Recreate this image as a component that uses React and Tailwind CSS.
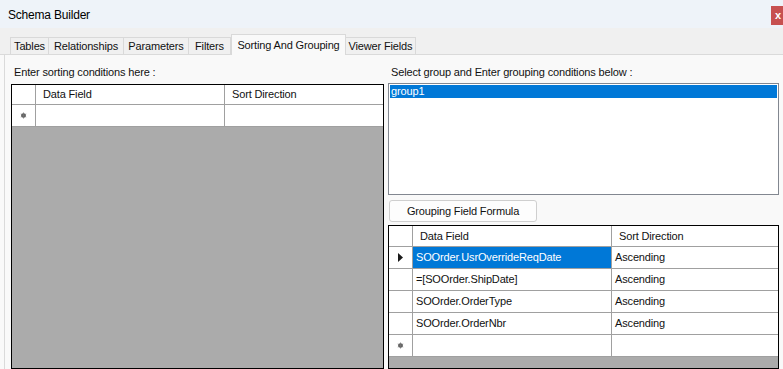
import React from "react";

const tabs = [
  { name: "Tables", w: "w-[39px]" },
  { name: "Relationships", w: "w-[75px]" },
  { name: "Parameters", w: "w-[65px]" },
  { name: "Filters", w: "w-[42px]" },
  { name: "Sorting And Grouping", w: "w-[115px]", active: true },
  { name: "Viewer Fields", w: "w-[70px]" },
];

const groupRows = [
  { field: "SOOrder.UsrOverrideReqDate", dir: "Ascending", current: true },
  { field: "=[SOOrder.ShipDate]", dir: "Ascending" },
  { field: "SOOrder.OrderType", dir: "Ascending" },
  { field: "SOOrder.OrderNbr", dir: "Ascending" },
];

function Arrow() {
  return (
    <svg width="5" height="9" viewBox="0 0 5 9">
      <path d="M0 0 L5 4.5 L0 9 Z" fill="#1a1a1a" />
    </svg>
  );
}

function Star() {
  return (
    <svg width="7" height="7" viewBox="0 0 7 7">
      <circle cx="3.5" cy="3.5" r="2.3" fill="#555" />
      <path d="M3.5 0.5 V6.5 M0.8 2 L6.2 5 M0.8 5 L6.2 2" stroke="#777" strokeWidth="0.8" />
    </svg>
  );
}

function App() {
  return (
    <div
      className="w-[783px] h-[369px] overflow-hidden flex flex-col bg-[#f9f9f9] text-[11px] tracking-[-0.15px] text-[#111]"
      style={{ fontFamily: '"Liberation Sans", Arial, sans-serif' }}
    >
      {/* title bar */}
      <div className="h-[28px] shrink-0 bg-[#eef3f9] flex items-start justify-between">
        <span className="pl-[8px] pt-[6px] text-[12px] tracking-[-0.2px] text-black">Schema Builder</span>
        <div className="mt-[6px] w-[12px] h-[19px] bg-[#c75050] overflow-hidden">
          <span className="block pl-[4px] text-white font-bold text-[11px] leading-[18px]">x</span>
        </div>
      </div>

      {/* tab strip */}
      <div className="h-[27px] shrink-0 bg-[#f0f0f0] flex items-end pl-[10px] border-b border-[#dadada]">
        {tabs.map((t) =>
          t.active ? (
            <div
              key={t.name}
              className={`${t.w} h-[21px] -mb-px bg-[#f9f9f9] border border-b-0 border-[#d9d9d9] flex items-start justify-center pt-[2px] whitespace-nowrap`}
            >
              {t.name}
            </div>
          ) : (
            <div
              key={t.name}
              className={`${t.w} h-[17px] bg-[#f0f0f0] border border-b-0 border-l-0 first:border-l border-[#d9d9d9] flex items-center justify-center whitespace-nowrap`}
            >
              {t.name}
            </div>
          )
        )}
      </div>

      {/* tab page */}
      <div className="flex-1 min-h-0 flex ml-[4px] border-l border-[#dadada] pt-[7px] pl-[6px] gap-[4px]">
        {/* left: sorting */}
        <div className="w-[373px] flex flex-col">
          <div className="h-[22px] pl-[3px] leading-[20px]">Enter sorting conditions here :</div>
          <div className="flex-1 border border-black bg-[#ababab] flex flex-col">
            <div className="flex h-[20px] bg-white border-b border-[#a0a0a0]">
              <div className="w-[24px] border-r border-[#a0a0a0]" />
              <div className="w-[189px] border-r border-[#a0a0a0] pl-[7px] flex items-center">Data Field</div>
              <div className="flex-1 pl-[7px] flex items-center">Sort Direction</div>
            </div>
            <div className="flex h-[22px] bg-white border-b border-[#a0a0a0]">
              <div className="w-[24px] border-r border-[#a0a0a0] flex items-center justify-center">
                <Star />
              </div>
              <div className="w-[189px] border-r border-[#a0a0a0]" />
              <div className="flex-1" />
            </div>
          </div>
        </div>

        {/* right: grouping */}
        <div className="w-[391px] flex flex-col">
          <div className="h-[21px] pl-[3px] leading-[20px]">Select group and Enter grouping conditions below :</div>
          <div className="h-[112px] border border-[#828790] bg-white p-px">
            <div className="h-[13px] bg-[#0078d7] text-white leading-[13px] pl-[1px]">group1</div>
          </div>
          <button className="mt-[5px] ml-px w-[148px] h-[22px] rounded-[3px] border border-[#cfcfcf] bg-[#fdfdfd] text-[#111] text-[11px] flex items-center justify-center">
            Grouping Field Formula
          </button>
          <div className="mt-[3px] flex-1 border border-black bg-[#ababab] flex flex-col">
            <div className="flex h-[21px] shrink-0 bg-white border-b border-[#a0a0a0]">
              <div className="w-[24px] border-r border-[#a0a0a0]" />
              <div className="w-[199px] border-r border-[#a0a0a0] pl-[7px] flex items-center">Data Field</div>
              <div className="flex-1 pl-[7px] flex items-center">Sort Direction</div>
            </div>
            {groupRows.map((r) => (
              <div key={r.field} className="flex h-[22px] shrink-0 bg-white border-b border-[#a0a0a0]">
                <div className="w-[24px] border-r border-[#a0a0a0] flex items-center justify-center">
                  {r.current && <Arrow />}
                </div>
                <div
                  className={`w-[199px] border-r border-[#a0a0a0] pl-[3px] flex items-center whitespace-nowrap ${
                    r.current ? "bg-[#0078d7] text-white" : ""
                  }`}
                >
                  {r.field}
                </div>
                <div className="flex-1 pl-[3px] flex items-center">{r.dir}</div>
              </div>
            ))}
            <div className="flex h-[22px] shrink-0 bg-white border-b border-[#a0a0a0]">
              <div className="w-[24px] border-r border-[#a0a0a0] flex items-center justify-center">
                <Star />
              </div>
              <div className="w-[199px] border-r border-[#a0a0a0]" />
              <div className="flex-1" />
            </div>
          </div>
        </div>
      </div>
    </div>
  );
}

export default App;
